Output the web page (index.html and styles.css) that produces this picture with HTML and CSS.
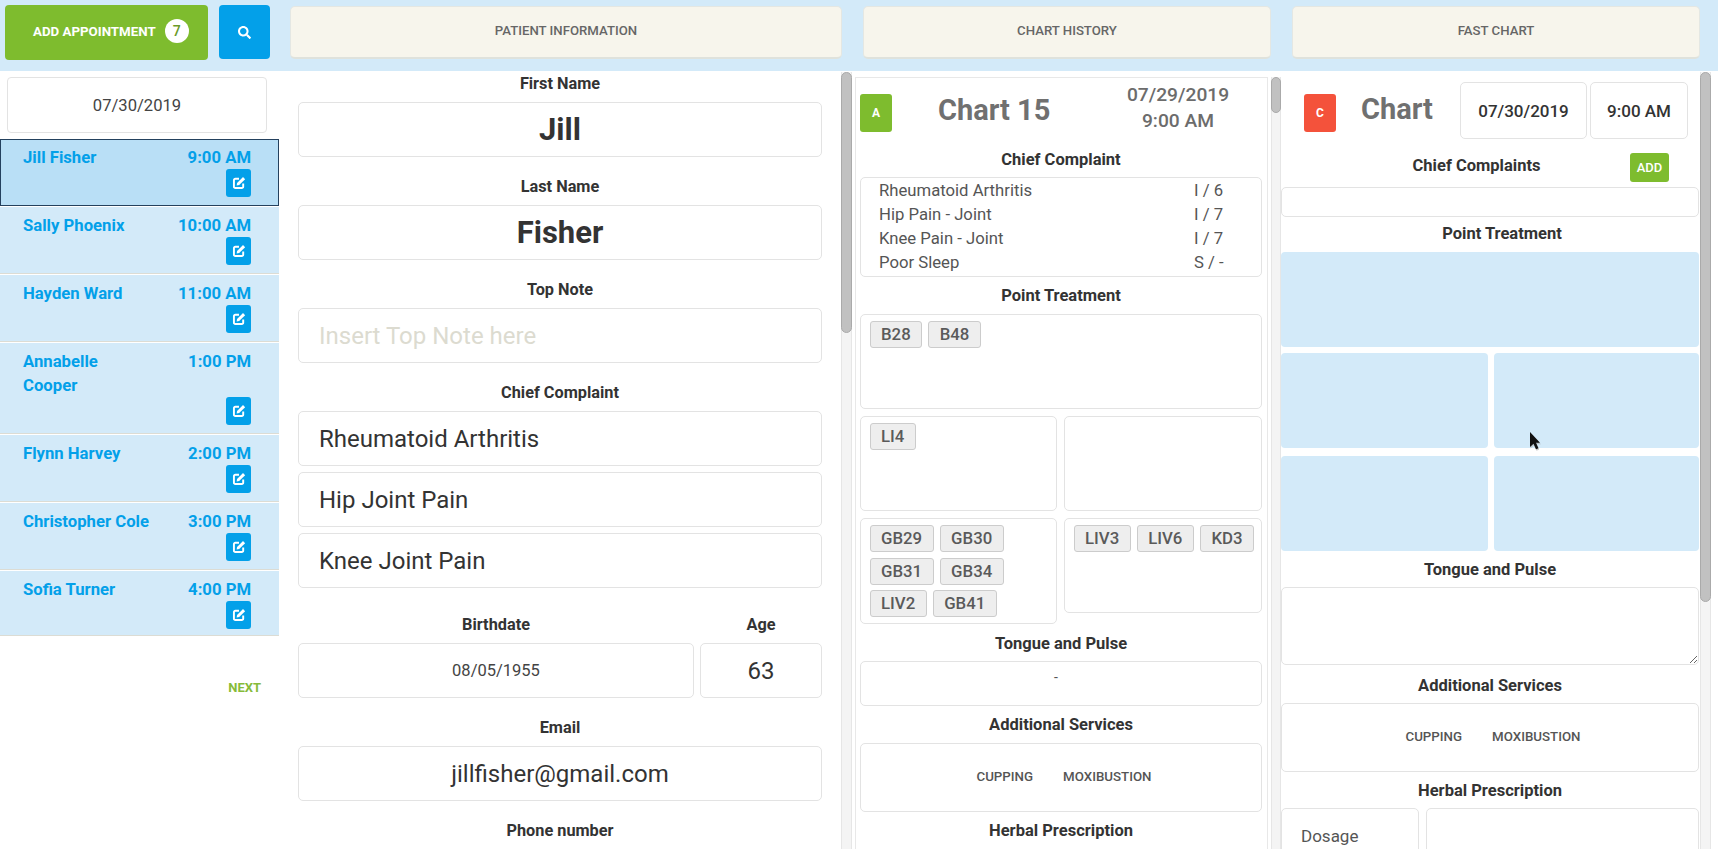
FILE: index.html
```html
<!DOCTYPE html>
<html lang="en">
<head>
<meta charset="utf-8">
<title>Chart</title>
<link rel="stylesheet" href="styles.css">
</head>
<body>
<header class="topbar">
  <button class="add-btn">ADD APPOINTMENT <span class="count">7</span></button>
  <button class="search-btn" aria-label="Search">
    <svg viewBox="0 0 512 512" width="13" height="13"><path fill="#fff" d="M505 442.700L405.300 343c-4.500-4.500-10.600-7-17-7H372c27.600-35.300 44-79.700 44-128C416 93.100 322.900 0 208 0S0 93.100 0 208s93.100 208 208 208c48.300 0 92.700-16.400 128-44v16.300c0 6.400 2.500 12.500 7 17l99.700 99.700c9.400 9.400 24.600 9.400 33.900 0l28.300-28.300c9.400-9.400 9.400-24.600.1-34zM208 336c-70.700 0-128-57.200-128-128 0-70.700 57.200-128 128-128 70.700 0 128 57.200 128 128 0 70.700-57.200 128-128 128z"/></svg>
  </button>
  <div class="tab tab-patient">PATIENT INFORMATION</div>
  <div class="tab tab-history">CHART HISTORY</div>
  <div class="tab tab-fast">FAST CHART</div>
</header>

<main class="main">
  <aside class="left">
    <div class="date-box">07/30/2019</div>
    <ul class="appts">
      <li class="appt selected"><span class="nm">Jill Fisher</span><span class="tm">9:00 AM</span><a class="edit"><svg viewBox="0 0 16 16" width="14" height="14"><path d="M8 3.200H3.800A1.600 1.600 0 0 0 2.200 4.800v7.400a1.600 1.600 0 0 0 1.600 1.600h7.400a1.600 1.600 0 0 0 1.600-1.600V8.500" fill="none" stroke="#fff" stroke-width="2.200"/><path d="M5.800 8 12.600 1.200l2.400 2.400-6.800 6.800-2.900.5z" fill="#fff"/></svg></a></li>
      <li class="appt"><span class="nm">Sally Phoenix</span><span class="tm">10:00 AM</span><a class="edit"><svg viewBox="0 0 16 16" width="14" height="14"><path d="M8 3.200H3.800A1.600 1.600 0 0 0 2.200 4.800v7.400a1.600 1.600 0 0 0 1.600 1.600h7.400a1.600 1.600 0 0 0 1.600-1.600V8.500" fill="none" stroke="#fff" stroke-width="2.200"/><path d="M5.800 8 12.600 1.200l2.400 2.400-6.800 6.800-2.900.5z" fill="#fff"/></svg></a></li>
      <li class="appt"><span class="nm">Hayden Ward</span><span class="tm">11:00 AM</span><a class="edit"><svg viewBox="0 0 16 16" width="14" height="14"><path d="M8 3.200H3.800A1.600 1.600 0 0 0 2.200 4.800v7.400a1.600 1.600 0 0 0 1.600 1.600h7.400a1.600 1.600 0 0 0 1.600-1.600V8.500" fill="none" stroke="#fff" stroke-width="2.200"/><path d="M5.800 8 12.600 1.200l2.400 2.400-6.800 6.800-2.900.5z" fill="#fff"/></svg></a></li>
      <li class="appt"><span class="nm narrow">Annabelle Cooper</span><span class="tm">1:00 PM</span><a class="edit"><svg viewBox="0 0 16 16" width="14" height="14"><path d="M8 3.200H3.800A1.600 1.600 0 0 0 2.200 4.800v7.400a1.600 1.600 0 0 0 1.600 1.600h7.400a1.600 1.600 0 0 0 1.600-1.600V8.500" fill="none" stroke="#fff" stroke-width="2.200"/><path d="M5.800 8 12.600 1.200l2.400 2.400-6.800 6.800-2.900.5z" fill="#fff"/></svg></a></li>
      <li class="appt"><span class="nm">Flynn Harvey</span><span class="tm">2:00 PM</span><a class="edit"><svg viewBox="0 0 16 16" width="14" height="14"><path d="M8 3.200H3.800A1.600 1.600 0 0 0 2.200 4.800v7.400a1.600 1.600 0 0 0 1.600 1.600h7.400a1.600 1.600 0 0 0 1.600-1.600V8.500" fill="none" stroke="#fff" stroke-width="2.200"/><path d="M5.800 8 12.600 1.200l2.400 2.400-6.800 6.800-2.900.5z" fill="#fff"/></svg></a></li>
      <li class="appt"><span class="nm">Christopher Cole</span><span class="tm">3:00 PM</span><a class="edit"><svg viewBox="0 0 16 16" width="14" height="14"><path d="M8 3.200H3.800A1.600 1.600 0 0 0 2.200 4.800v7.400a1.600 1.600 0 0 0 1.600 1.600h7.400a1.600 1.600 0 0 0 1.600-1.600V8.500" fill="none" stroke="#fff" stroke-width="2.200"/><path d="M5.800 8 12.600 1.200l2.400 2.400-6.800 6.800-2.900.5z" fill="#fff"/></svg></a></li>
      <li class="appt"><span class="nm">Sofia Turner</span><span class="tm">4:00 PM</span><a class="edit"><svg viewBox="0 0 16 16" width="14" height="14"><path d="M8 3.200H3.800A1.600 1.600 0 0 0 2.200 4.800v7.400a1.600 1.600 0 0 0 1.600 1.600h7.400a1.600 1.600 0 0 0 1.600-1.600V8.500" fill="none" stroke="#fff" stroke-width="2.200"/><path d="M5.800 8 12.600 1.200l2.400 2.400-6.800 6.800-2.900.5z" fill="#fff"/></svg></a></li>
    </ul>
    <div class="next">NEXT</div>
  </aside>

  <section class="patient">
    <div class="p-label first">First Name</div>
    <div class="field big">Jill</div>
    <div class="p-label">Last Name</div>
    <div class="field big">Fisher</div>
    <div class="p-label">Top Note</div>
    <div class="field left-text placeholder">Insert Top Note here</div>
    <div class="p-label">Chief Complaint</div>
    <div class="field left-text">Rheumatoid Arthritis</div>
    <div class="field left-text stack">Hip Joint Pain</div>
    <div class="field left-text stack">Knee Joint Pain</div>
    <div class="birth-row">
      <div class="birth">
        <div class="p-label">Birthdate</div>
        <div class="field small">08/05/1955</div>
      </div>
      <div class="age">
        <div class="p-label">Age</div>
        <div class="field mid">63</div>
      </div>
    </div>
    <div class="p-label">Email</div>
    <div class="field mid">jillfisher@gmail.com</div>
    <div class="p-label">Phone number</div>
  </section>

  <div class="scroll sb-patient"><div class="thumb"></div></div>

  <section class="history">
    <div class="h-head">
      <span class="badge green">A</span>
      <h2 class="chart-title">Chart 15</h2>
      <div class="h-date">07/29/2019<br>9:00 AM</div>
    </div>
    <div class="c-label">Chief Complaint</div>
    <div class="box complaints">
      <div class="cc"><span>Rheumatoid Arthritis</span><span>I / 6</span></div>
      <div class="cc"><span>Hip Pain - Joint</span><span>I / 7</span></div>
      <div class="cc"><span>Knee Pain - Joint</span><span>I / 7</span></div>
      <div class="cc"><span>Poor Sleep</span><span>S / -</span></div>
    </div>
    <div class="c-label up">Point Treatment</div>
    <div class="box chips tall"><span class="chip">B28</span><span class="chip">B48</span></div>
    <div class="two">
      <div class="box chips tall"><span class="chip">LI4</span></div>
      <div class="box chips tall"></div>
      <div class="box chips"><span class="chip">GB29</span><span class="chip">GB30</span><span class="chip">GB31</span><span class="chip">GB34</span><span class="chip">LIV2</span><span class="chip">GB41</span></div>
      <div class="box chips tall pad-right"><span class="chip">LIV3</span><span class="chip">LIV6</span><span class="chip">KD3</span></div>
    </div>
    <div class="c-label">Tongue and Pulse</div>
    <div class="box tongue">-</div>
    <div class="c-label up">Additional Services</div>
    <div class="box services"><span>CUPPING</span><span>MOXIBUSTION</span></div>
    <div class="c-label up">Herbal Prescription</div>
    <div class="box herbal"></div>
  </section>

  <div class="scroll sb-history"><div class="thumb"></div></div>

  <section class="fast">
    <div class="f-head">
      <span class="badge red">C</span>
      <h2 class="chart-title">Chart</h2>
      <div class="f-box f-date">07/30/2019</div>
      <div class="f-box f-time">9:00 AM</div>
    </div>
    <div class="f-cc-row">
      <div class="f-cc-label">Chief Complaints</div>
      <button class="add-small">ADD</button>
    </div>
    <div class="box f-input"></div>
    <div class="c-label f-point">Point Treatment</div>
    <div class="blue blue-top"></div>
    <div class="blue-grid">
      <div class="blue"></div><div class="blue"></div>
      <div class="blue"></div><div class="blue"></div>
    </div>
    <div class="c-label f-tongue">Tongue and Pulse</div>
    <textarea class="f-area"></textarea>
    <div class="c-label f-add">Additional Services</div>
    <div class="box services f-services"><span>CUPPING</span><span>MOXIBUSTION</span></div>
    <div class="c-label f-herbal">Herbal Prescription</div>
    <div class="herbal-row">
      <div class="box dosage">Dosage</div>
      <div class="box herbs"></div>
    </div>
  </section>

  <div class="scroll sb-fast"><div class="thumb"></div></div>
</main>

<svg class="cursor" viewBox="0 0 13 20" width="13" height="20"><path d="M1.500 1.500v15l3.500-3.300 2.500 5.600 2.600-1.100-2.500-5.500H12z" fill="#aaa" opacity=".6"/><path d="M1 0v15l3.500-3.300 2.500 5.600 2.500-1.100-2.500-5.500H11z" fill="#111"/></svg>
</body>
</html>
```
FILE: styles.css
```css
* { box-sizing: border-box; }
html, body { margin: 0; height: 100%; overflow: hidden; background: #fff; }
body { font-family: Roboto, "Liberation Sans", sans-serif; color: #333; }
button { font-family: inherit; border: 0; padding: 0; }
h2 { margin: 0; }

.topbar { height: 71px; background: #d3eaf9; display: flex; align-items: flex-start; padding: 5px 18px 0 5px; }
.add-btn { width: 203px; height: 55px; background: #7ebc2e; color: #fff; font-size: 13.3px; font-weight: 700; border-radius: 4px; display: flex; align-items: center; justify-content: flex-start; gap: 9px; padding-left: 28px; padding-bottom: 3px; }
.count { width: 24px; height: 24px; border-radius: 50%; background: #fff; color: #6a9a28; font-size: 14px; font-weight: 500; display: flex; align-items: center; justify-content: center; }
.search-btn { width: 51px; height: 54px; margin-left: 11px; background: #03a0e9; border-radius: 4px; display: flex; align-items: center; justify-content: center; }
.tab { height: 53px; margin-top: 1px; background: #f7f5ec; border: 1px solid #e4e7e3; border-bottom: 2px solid #dfe2dc; border-radius: 5px; display: flex; align-items: center; justify-content: center; font-size: 13.2px; font-weight: 500; color: #666; padding-bottom: 4px; }
.tab-patient { width: 552px; margin-left: 20px; }
.tab-history { width: 408px; margin-left: 21px; }
.tab-fast { width: 408px; margin-left: 21px; }

.main { display: flex; height: 778px; overflow: hidden; align-items: flex-start; }

.left { width: 279px; flex: none; margin-right: 19px; }
.date-box { height: 56px; margin: 6px 12px 6px 7px; border: 1px solid #e3e3e3; border-radius: 4px; display: flex; align-items: center; justify-content: center; font-size: 16.6px; color: #444; }
.appts { list-style: none; margin: 0; padding: 0; }
.appt { background: #d3eaf9; padding: 7px 28px 8px 23px; display: grid; grid-template-columns: 1fr auto; line-height: 24px; font-size: 16.7px; font-weight: 700; color: #03a0e9; border-bottom: 1px solid #dcdcd4; margin-bottom: 1px; }
.appts .appt:last-child { margin-bottom: 0; padding-bottom: 6px; }
.appt.selected { background: #b9dff6; outline: 1.5px solid #24415e; outline-offset: -1.5px; margin-bottom: 1px; }
.nm.narrow { width: 110px; }
.tm { text-align: right; }
.edit { grid-column: 2; justify-self: end; width: 25px; height: 28px; margin-top: -1px; background: #03a0e9; border-radius: 3px; display: flex; align-items: center; justify-content: center; }
.next { margin: 44px 18px 0 0; text-align: right; color: #86bb3a; font-size: 13px; font-weight: 700; line-height: 16px; }

.patient { width: 524px; flex: none; margin-right: 19px; }
.p-label { line-height: 24px; margin: 18px 0 6px; text-align: center; font-size: 16.3px; font-weight: 700; color: #333; }
.p-label.first { margin-top: 1px; }
.field { height: 55px; border: 1px solid #e3e3e3; border-radius: 5px; display: flex; align-items: center; justify-content: center; font-size: 24px; color: #333; }
.field.big { font-size: 31px; font-weight: 700; }
.field.left-text { justify-content: flex-start; padding-left: 20px; }
.field.stack { margin-top: 6px; }
.field.placeholder { color: #dcdbd0; }
.field.small { font-size: 16.5px; color: #444; }
.field.mid { font-size: 24px; }
.birth-row { display: flex; gap: 6px; padding-top: 7px; }
.birth { width: 396px; }
.age { flex: 1; }

.scroll { flex: none; width: 11px; height: 778px; background: #f4f4f4; border-left: 1px solid #e6e6e6; border-right: 1px solid #e6e6e6; }
.thumb { background: #c1c1c1; border-radius: 6px; width: 11px; margin-left: -1px; border: 1px solid #aaa; }
.sb-patient { margin-top: 1px; }
.sb-patient .thumb { height: 261px; }
.sb-history { margin-top: 6px; margin-left: 3px; width: 10px; }
.sb-history .thumb { height: 36px; width: 10px; }
.sb-fast { margin-top: 1px; margin-left: 1px; }
.sb-fast .thumb { height: 530px; }

.history { width: 413px; flex: none; margin: 6px 0 0 3px; border: 1px solid #e8e8e8; padding: 0 5px 0 4px; }
.h-head { height: 62px; display: flex; align-items: flex-start; }
.badge { width: 32px; height: 38px; margin-top: 16px; border-radius: 3px; display: flex; align-items: center; justify-content: center; color: #fff; font-size: 12px; font-weight: 700; flex: none; }
.badge.green { background: #7ebc2e; }
.badge.red { background: #f4523b; }
.chart-title { font-size: 29px; font-weight: 700; color: #707070; line-height: 36px; margin: 14px 0 0 46px; }
.h-date { margin: 4px 19px 0 auto; width: 130px; text-align: center; font-size: 19.2px; font-weight: 500; color: #6c6c6c; line-height: 26px; }

.c-label { line-height: 24px; margin: 8px 0 5px; text-align: center; font-size: 16.5px; font-weight: 700; color: #333; }
.c-label.up { margin: 7px 0 6px; }
.box { border: 1px solid #e3e3e3; border-radius: 5px; }
.complaints { height: 100px; padding: 1px 0 0 18px; color: #555; font-size: 16.7px; line-height: 24px; }
.cc { display: grid; grid-template-columns: 315px auto; }
.chips { display: flex; flex-wrap: wrap; align-content: flex-start; gap: 5.5px 6px; padding: 6px 6px 6px 8.500px; }
.chips.tall { height: 95px; }
.chips.pad-right { padding-left: 8.500px; padding-right: 4px; }
.chip { height: 27px; padding: 0 10.500px; background: #eee; border: 1px solid #ccc; border-radius: 3px; font-size: 16.8px; font-weight: 500; color: #5a5a5a; line-height: 25px; }
.history > .chips.tall { margin-bottom: 7px; }
.two { display: grid; grid-template-columns: 197px 198px; gap: 7px; align-items: start; }
.tongue { height: 45px; text-align: center; line-height: 30px; font-size: 14px; color: #555; padding-right: 10px; }
.services { height: 69px; display: flex; align-items: center; justify-content: center; gap: 30px; font-size: 13.3px; font-weight: 500; color: #555; padding-bottom: 3px; padding-left: 6px; }
.herbal { height: 60px; }

.fast { width: 418px; flex: none; margin-left: 0; }
.f-head { display: flex; align-items: flex-start; padding-top: 11px; height: 68px; }
.f-head .badge { margin: 12px 0 0 23px; }
.f-head .chart-title { margin: 9px 0 0 25px; }
.f-box { height: 57px; border: 1px solid #e3e3e3; border-radius: 5px; display: flex; align-items: center; justify-content: center; font-size: 17px; font-weight: 500; color: #333; }
.f-date { width: 127px; margin-left: auto; }
.f-time { width: 98px; margin-left: 3px; margin-right: 11px; }
.f-cc-row { display: flex; margin-top: 14px; height: 29px; }
.f-cc-label { flex: 0 0 349px; padding-left: 42px; padding-top: 1px; text-align: center; font-size: 16.5px; font-weight: 700; line-height: 24px; color: #333; }
.add-small { width: 39px; height: 29px; background: #7ebc2e; color: #fff; border-radius: 3px; font-size: 13px; font-weight: 500; }
.f-input { height: 30px; margin-top: 5px; }
.fast .c-label.f-point { margin: 5px 0 6px; padding-left: 24px; }
.blue { background: #d3eaf9; border-radius: 4px; height: 95px; }
.blue-top { margin-bottom: 6px; }
.blue-grid { display: grid; grid-template-columns: 207px 205px; gap: 8px 6px; }
.f-area { display: block; width: 100%; height: 78px; margin: 0; border: 1px solid #e3e3e3; border-radius: 5px; background: #fff; }
.fast .c-label.f-tongue { margin: 7px 0 5px; }
.fast .c-label.f-add { margin: 9px 0 5px; }
.fast .c-label.f-herbal { margin: 7px 0 5px; }
.herbal-row { display: flex; gap: 7px; }
.dosage { width: 138px; height: 60px; padding: 17px 0 0 19px; font-size: 17px; color: #555; }
.herbs { flex: 1; height: 60px; }

.cursor { position: absolute; left: 1529px; top: 432px; }
```
